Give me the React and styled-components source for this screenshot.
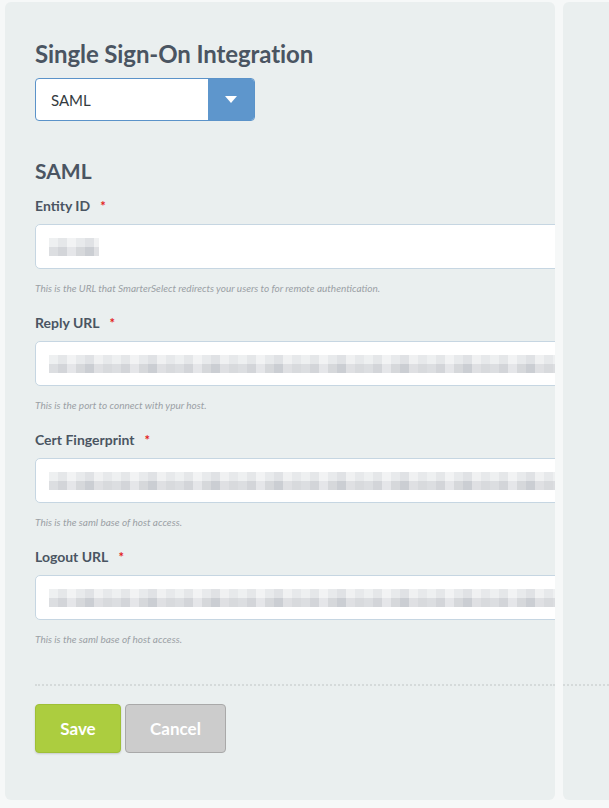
import React from 'react';
import styled, { createGlobalStyle } from 'styled-components';

const GlobalStyle = createGlobalStyle`
  html, body {
    margin: 0;
    padding: 0;
    background: #f6f8f8;
    font-family: Lato, "Open Sans", sans-serif;
  }
`;

const Page = styled.div`
  display: flex;
  column-gap: 8px;
  padding: 2px 0 3px 5px;
  height: 803px;
  box-sizing: border-box;
  overflow: hidden;
`;

const Panel = styled.div`
  flex: 0 0 550px;
  background: #eaefef;
  border-radius: 6px;
  padding: 37px 0 0 30px;
  box-sizing: border-box;
  overflow: hidden;
`;

const SidePanel = styled.div`
  flex: 1;
  background: #eaefef;
  border-radius: 6px 0 0 6px;
  padding-top: 682px;
  box-sizing: border-box;
`;

const Title = styled.h1`
  margin: 0;
  font-size: 24px;
  font-weight: 700;
  color: #4a5562;
  line-height: 30px;
  letter-spacing: -0.1px;
`;

const Select = styled.div`
  display: flex;
  width: 220px;
  height: 43px;
  margin-top: 9px;
  border: 1px solid #5b93c9;
  border-radius: 4px;
  box-sizing: border-box;
  overflow: hidden;
  background: #fff;
`;

const SelectValue = styled.div`
  flex: 1;
  display: flex;
  align-items: center;
  padding-left: 15px;
  font-size: 15px;
  color: #333a40;
`;

const SelectButton = styled.div`
  flex: 0 0 46px;
  background: #5e96cc;
  display: flex;
  align-items: center;
  justify-content: center;

  svg {
    display: block;
  }
`;

const SectionTitle = styled.h2`
  margin: 37px 0 0;
  font-size: 21px;
  font-weight: 700;
  color: #4a5562;
  line-height: 26px;
`;

const Field = styled.div`
  margin-top: ${(p) => p.first ? '13px' : '19px'};
`;

const Label = styled.div`
  font-size: 14px;
  font-weight: 700;
  color: #4a5562;
  line-height: 18px;

  span {
    color: #e31b1b;
    margin-left: 10px;
    font-size: 13px;
  }
`;

const InputBox = styled.div`
  width: 540px;
  height: 45px;
  margin-top: 9px;
  background: #fff;
  border: 1px solid #c6d6e2;
  border-radius: 5px;
  box-sizing: border-box;
  display: flex;
  align-items: center;
  padding-left: 13px;
`;

const Redacted = styled.div`
  height: 18px;
  width: ${(p) => p.w}px;
  background:
    repeating-linear-gradient(90deg,
      #eef0f1 0 9px, #e5e7e9 9px 18px, #f2f3f4 18px 27px, #e8eaec 27px 36px, #e0e2e5 36px 45px, #f0f1f2 45px 54px, #e7e9eb 54px 63px) top / 100% 50% no-repeat,
    repeating-linear-gradient(90deg,
      #dcdee1 0 9px, #d3d5d9 9px 18px, #e5e6e9 18px 27px, #d6d8db 27px 36px, #cbced3 36px 45px, #dfe0e3 45px 54px, #d8dadd 54px 63px) bottom / 100% 50% no-repeat;
`;

const Help = styled.div`
  margin-top: 12px;
  font-size: 10px;
  font-style: italic;
  color: #9aa0a5;
  line-height: 14px;
`;

const Divider = styled.div`
  margin-top: 38px;
  border-top: 2px dotted #d5dada;
`;

const SideDivider = styled.div`
  border-top: 2px dotted #d5dada;
`;

const Actions = styled.div`
  display: flex;
  column-gap: 4px;
  margin-top: 18px;
`;

const Button = styled.button`
  height: 49px;
  padding: 0;
  width: ${(p) => p.w}px;
  border-radius: 4px;
  font-family: inherit;
  font-size: 17px;
  font-weight: 700;
  color: #fff;
  cursor: pointer;
  background: ${(p) => p.primary ? '#accd3f' : '#cccccc'};
  border: 1px solid ${(p) => p.primary ? '#9fc036' : '#a9a9a9'};
  box-shadow: ${(p) => p.primary ? '0 1px 2px rgba(0,0,0,0.15)' : 'none'};
`;

const fields = [
  { label: 'Entity ID', help: 'This is the URL that SmarterSelect redirects your users to for remote authentication.', w: 50 },
  { label: 'Reply URL', help: 'This is the port to connect with ypur host.', w: 530 },
  { label: 'Cert Fingerprint', help: 'This is the saml base of host access.', w: 520 },
  { label: 'Logout URL', help: 'This is the saml base of host access.', w: 530 },
];

const App = () => {
  return (
    <>
      <GlobalStyle />
      <Page>
        <Panel>
          <Title>Single Sign-On Integration</Title>
          <Select>
            <SelectValue>SAML</SelectValue>
            <SelectButton>
              <svg width="12" height="7" viewBox="0 0 12 7">
                <path d="M0 0 L12 0 L6 7 Z" fill="#fff" />
              </svg>
            </SelectButton>
          </Select>
          <SectionTitle>SAML</SectionTitle>
          {fields.map((f, i) => (
            <Field first={i === 0} key={f.label}>
              <Label>{f.label}<span>*</span></Label>
              <InputBox>
                <Redacted w={f.w} />
              </InputBox>
              <Help>{f.help}</Help>
            </Field>
          ))}
          <Divider />
          <Actions>
            <Button primary w={86}>Save</Button>
            <Button w={101}>Cancel</Button>
          </Actions>
        </Panel>
        <SidePanel>
          <SideDivider />
        </SidePanel>
      </Page>
    </>
  );
};

export default App;
